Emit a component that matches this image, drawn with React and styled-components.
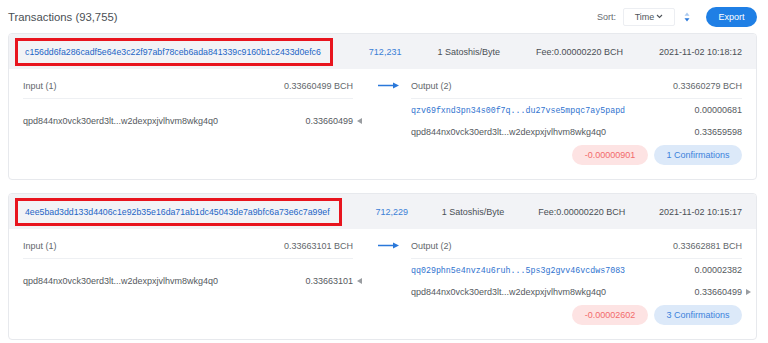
import React from 'react';
import styled, { createGlobalStyle } from 'styled-components';

const GlobalStyle = createGlobalStyle`
  body {
    margin: 0;
    background: #ffffff;
    font-family: "Liberation Sans", Arial, sans-serif;
    color: #555a60;
  }
`;

const Page = styled.div`
  padding: 0 11px 0 8px;
`;

const TopBar = styled.div`
  display: flex;
  align-items: center;
  height: 33px;
`;

const Title = styled.h2`
  margin: 0;
  font-size: 11.3px;
  font-weight: normal;
  color: #4a4f55;
  flex: 1;
`;

const SortLabel = styled.span`
  font-size: 9px;
  color: #666b70;
  margin-right: 7px;
`;

const Select = styled.div`
  display: flex;
  align-items: center;
  justify-content: center;
  gap: 2px;
  width: 52px;
  height: 18px;
  box-sizing: border-box;
  border: 1px solid #eceef2;
  border-radius: 2px;
  font-size: 9px;
  color: #50555a;
`;

const SortIcon = styled.svg`
  margin: 0 16px 0 9px;
`;

const ExportButton = styled.button`
  width: 51px;
  height: 20px;
  border: none;
  border-radius: 10px;
  background: #1f7fe5;
  color: #ffffff;
  font-family: inherit;
  font-size: 9px;
  padding: 0;
`;

const Card = styled.div`
  border: 1px solid #e7e9ed;
  border-radius: 4px;
  margin-bottom: 13px;
  overflow: hidden;
`;

const CardHeader = styled.div`
  display: flex;
  align-items: center;
  justify-content: space-between;
  height: 35px;
  padding: 0 14px 0 6px;
  background: #f2f3f6;
  font-size: 9px;
  color: #4a4f55;
`;

const HashBox = styled.div`
  display: flex;
  align-items: center;
  height: 28px;
  box-sizing: border-box;
  padding: 0 9px 0 7px;
  border: 3px solid #e8141e;
  font-size: 8.75px;
`;

const Link = styled.span`
  color: ${({ muted }) => (muted ? '#3b7fd6' : '#2265c6')};
`;

const Body = styled.div`
  display: grid;
  grid-template-columns: 330px 58px 1fr;
  padding: 0 14px 14px 14px;
  font-size: 9px;
`;

const Side = styled.div`
  display: flex;
  flex-direction: column;
`;

const Head = styled.div`
  display: flex;
  justify-content: space-between;
  align-items: center;
  height: 25px;
  margin-top: 4px;
  border-bottom: 1px solid #eef0f3;
  color: #62676c;
`;

const Rows = styled.div`
  display: flex;
  flex-direction: column;
  margin-top: ${({ offset }) => offset || 0}px;
`;

const Row = styled.div`
  display: flex;
  justify-content: space-between;
  align-items: center;
  height: 22px;
  color: #55595e;
`;

const Amount = styled.span`
  display: flex;
  align-items: center;
`;

const Marker = styled.span`
  width: 0;
  height: 0;
  margin-left: 4px;
  margin-right: -9px;
  border-top: 3px solid transparent;
  border-bottom: 3px solid transparent;
  ${({ dir }) =>
    dir === 'left'
      ? 'border-right: 5px solid #9a9da1;'
      : 'border-left: 5px solid #9a9da1;'}
`;

const Mono = styled.span`
  font-family: "Liberation Mono", "DejaVu Sans Mono", monospace;
  font-size: 8.3px;
  color: #2f73cf;
`;

const Middle = styled.div`
  display: flex;
  align-items: flex-start;
  padding: 4px 0 0 25px;
  height: 25px;
  box-sizing: content-box;
`;

const ArrowWrap = styled.div`
  height: 25px;
  display: flex;
  align-items: center;
`;

const Badges = styled.div`
  display: flex;
  justify-content: flex-end;
  gap: 6px;
  margin-top: 2px;
`;

const Badge = styled.span`
  display: flex;
  align-items: center;
  justify-content: center;
  height: 20px;
  border-radius: 10px;
  width: ${({ w }) => w}px;
  background: ${({ tone }) => (tone === 'red' ? '#fde3e3' : '#dce9f9')};
  color: ${({ tone }) => (tone === 'red' ? '#f26b6b' : '#3b82dc')};
`;

const transactions = [
  {
    hash: 'c156dd6fa286cadf5e64e3c22f97abf78ceb6ada841339c9160b1c2433d0efc6',
    block: '712,231',
    fee: 'Fee:0.00000220 BCH',
    time: '2021-11-02 10:18:12',
    inputTotal: '0.33660499 BCH',
    inputs: [{ addr: 'qpd844nx0vck30erd3lt...w2dexpxjvlhvm8wkg4q0', amount: '0.33660499' }],
    outputTotal: '0.33660279 BCH',
    outputs: [
      { addr: 'qzv69fxnd3pn34s00f7q...du27vse5mpqc7ay5papd', amount: '0.00000681', mono: true },
      { addr: 'qpd844nx0vck30erd3lt...w2dexpxjvlhvm8wkg4q0', amount: '0.33659598' },
    ],
    diff: '-0.00000901',
    confirmations: '1 Confirmations',
  },
  {
    hash: '4ee5bad3dd133d4406c1e92b35e16da71ab1dc45043de7a9bfc6a73e6c7a99ef',
    block: '712,229',
    fee: 'Fee:0.00000220 BCH',
    time: '2021-11-02 10:15:17',
    inputTotal: '0.33663101 BCH',
    inputs: [{ addr: 'qpd844nx0vck30erd3lt...w2dexpxjvlhvm8wkg4q0', amount: '0.33663101' }],
    outputTotal: '0.33662881 BCH',
    outputs: [
      { addr: 'qq029phn5e4nvz4u6ruh...5ps3g2gvv46vcdws7083', amount: '0.00002382', mono: true },
      { addr: 'qpd844nx0vck30erd3lt...w2dexpxjvlhvm8wkg4q0', amount: '0.33660499', marker: true },
    ],
    diff: '-0.00002602',
    confirmations: '3 Confirmations',
  },
];

const Arrow = () => (
  <svg width="21" height="7" viewBox="0 0 21 7">
    <line x1="0" y1="3.5" x2="17" y2="3.5" stroke="#2a78da" strokeWidth="1.3" />
    <path d="M15 0.5 L21 3.5 L15 6.5 Z" fill="#2a78da" />
  </svg>
);

const Chevron = () => (
  <svg width="7" height="5" viewBox="0 0 7 5">
    <path d="M1 1 L3.5 3.5 L6 1" fill="none" stroke="#50555a" strokeWidth="1.1" />
  </svg>
);

const Transaction = ({ tx }) => (
  <Card>
    <CardHeader>
      <HashBox>
        <Link>{tx.hash}</Link>
      </HashBox>
      <Link muted>{tx.block}</Link>
      <span>1 Satoshis/Byte</span>
      <span>{tx.fee}</span>
      <span>{tx.time}</span>
    </CardHeader>
    <Body>
      <Side>
        <Head>
          <span>Input ({tx.inputs.length})</span>
          <span>{tx.inputTotal}</span>
        </Head>
        <Rows offset={11}>
          {tx.inputs.map((row, i) => (
            <Row key={i}>
              <span>{row.addr}</span>
              <Amount>
                {row.amount}
                <Marker dir="left" />
              </Amount>
            </Row>
          ))}
        </Rows>
      </Side>
      <Middle>
        <ArrowWrap>
          <Arrow />
        </ArrowWrap>
      </Middle>
      <Side>
        <Head>
          <span>Output ({tx.outputs.length})</span>
          <span>{tx.outputTotal}</span>
        </Head>
        <Rows>
          {tx.outputs.map((row, i) => (
            <Row key={i}>
              {row.mono ? <Mono>{row.addr}</Mono> : <span>{row.addr}</span>}
              <Amount>
                {row.amount}
                {row.marker && <Marker dir="right" />}
              </Amount>
            </Row>
          ))}
        </Rows>
        <Badges>
          <Badge tone="red" w={76}>{tx.diff}</Badge>
          <Badge tone="blue" w={88}>{tx.confirmations}</Badge>
        </Badges>
      </Side>
    </Body>
  </Card>
);

export default function App() {
  return (
    <Page>
      <GlobalStyle />
      <TopBar>
        <Title>Transactions (93,755)</Title>
        <SortLabel>Sort:</SortLabel>
        <Select>
          Time <Chevron />
        </Select>
        <SortIcon width="6" height="10" viewBox="0 0 6 10">
          <path d="M3 0.5 L5.5 3.8 L0.5 3.8 Z" fill="#a9c8ef" />
          <path d="M3 9.5 L5.5 6.2 L0.5 6.2 Z" fill="#2a78da" />
        </SortIcon>
        <ExportButton>Export</ExportButton>
      </TopBar>
      {transactions.map((tx) => (
        <Transaction key={tx.hash} tx={tx} />
      ))}
    </Page>
  );
}
